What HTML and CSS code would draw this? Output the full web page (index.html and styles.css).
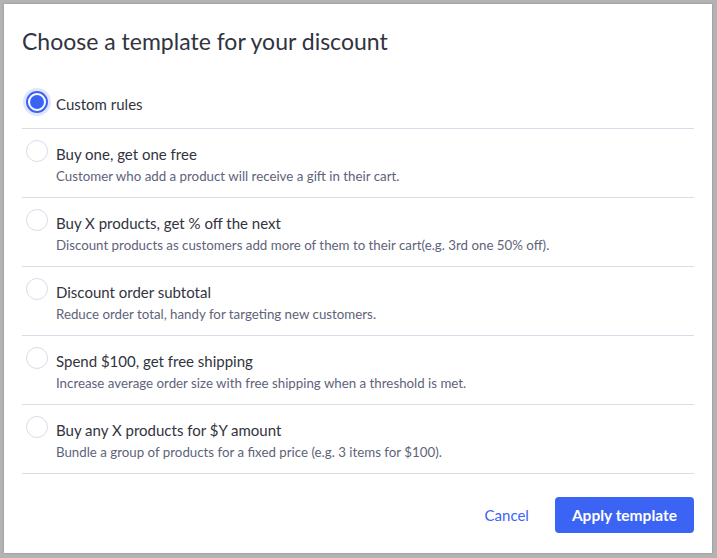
FILE: index.html
```html
<!DOCTYPE html>
<html lang="en">
<head>
    <meta charset="UTF-8">
    <meta name="viewport" content="width=device-width, initial-scale=1.0">
    <title>Choose a template</title>
    <link rel="stylesheet" href="styles.css">
</head>
<body>
    <div class="modal">
        <h2 class="modal-title">Choose a template for your discount</h2>

        <form class="template-list">
            <label class="template-row">
                <input type="radio" name="template" value="custom" checked>
                <span class="radio"></span>
                <span class="template-text">
                    <span class="template-name">Custom rules</span>
                </span>
            </label>
            <label class="template-row">
                <input type="radio" name="template" value="bogo">
                <span class="radio"></span>
                <span class="template-text">
                    <span class="template-name">Buy one, get one free</span>
                    <span class="template-desc">Customer who add a product will receive a gift in their cart.</span>
                </span>
            </label>
            <label class="template-row">
                <input type="radio" name="template" value="buy-x">
                <span class="radio"></span>
                <span class="template-text">
                    <span class="template-name">Buy X products, get % off the next</span>
                    <span class="template-desc">Discount products as customers add more of them to their cart(e.g. 3rd one 50% off).</span>
                </span>
            </label>
            <label class="template-row">
                <input type="radio" name="template" value="subtotal">
                <span class="radio"></span>
                <span class="template-text">
                    <span class="template-name">Discount order subtotal</span>
                    <span class="template-desc">Reduce order total, handy for targeting new customers.</span>
                </span>
            </label>
            <label class="template-row">
                <input type="radio" name="template" value="shipping">
                <span class="radio"></span>
                <span class="template-text">
                    <span class="template-name">Spend $100, get free shipping</span>
                    <span class="template-desc">Increase average order size with free shipping when a threshold is met.</span>
                </span>
            </label>
            <label class="template-row">
                <input type="radio" name="template" value="bundle">
                <span class="radio"></span>
                <span class="template-text">
                    <span class="template-name">Buy any X products for $Y amount</span>
                    <span class="template-desc">Bundle a group of products for a fixed price (e.g. 3 items for $100).</span>
                </span>
            </label>
        </form>

        <div class="modal-actions">
            <button type="button" class="btn-link">Cancel</button>
            <button type="button" class="btn-primary">Apply template</button>
        </div>
    </div>
</body>
</html>
```

FILE: styles.css
```css
body {
    font-family: Lato, "Noto Sans", sans-serif;
    margin: 0;
    padding: 4px 5px 5px 4px;
    background-color: #b3b3b3;
    color: #313440;
}

.modal {
    width: 708px;
    height: 549px;
    box-sizing: border-box;
    background: #fff;
    padding: 21px 18px 20px 18px;
    box-shadow: 0 0 2px rgba(0, 0, 0, 0.25);
    display: flex;
    flex-direction: column;
}

.modal-title {
    margin: 0 0 21px 0;
    font-size: 23px;
    line-height: 32px;
    font-weight: 400;
    color: #313440;
}

.template-list {
    margin: 0;
}

.template-row {
    display: flex;
    align-items: flex-start;
    gap: 8px;
    padding: 13px 0 12px 4px;
    border-bottom: 1px solid #d9dce9;
    cursor: pointer;
}

.template-row:first-child {
    padding-top: 14px;
    padding-bottom: 12px;
}

.template-row input {
    display: none;
}

.radio {
    flex: none;
    width: 22px;
    height: 22px;
    box-sizing: border-box;
    margin-top: -2px;
    border: 1px solid #d9dce9;
    border-radius: 50%;
    background: #fff;
    position: relative;
}

.template-row input:checked + .radio {
    margin-top: -1px;
    border: 2px solid #3c64f4;
    box-shadow: 0 0 0 3px rgba(60, 100, 244, 0.16);
}

.template-row input:checked + .radio::after {
    content: "";
    position: absolute;
    top: 2px;
    left: 2px;
    width: 14px;
    height: 14px;
    border-radius: 50%;
    background: #3c64f4;
}

.template-text {
    display: flex;
    flex-direction: column;
}

.template-name {
    font-size: 15px;
    line-height: 24px;
    color: #313440;
}

.template-desc {
    margin-top: 1px;
    font-size: 13.3px;
    line-height: 18px;
    color: #5e637a;
}

.modal-actions {
    margin-top: auto;
    display: flex;
    justify-content: flex-end;
    align-items: center;
    gap: 10px;
}

.btn-link {
    font-family: inherit;
    font-size: 15px;
    height: 36px;
    padding: 0 16px;
    border: none;
    background: none;
    color: #3c64f4;
    cursor: pointer;
}

.btn-primary {
    font-family: inherit;
    font-size: 15.5px;
    font-weight: bold;
    height: 36px;
    padding: 0 17px;
    border: none;
    border-radius: 4px;
    background-color: #3c64f4;
    color: #fff;
    cursor: pointer;
}
```
